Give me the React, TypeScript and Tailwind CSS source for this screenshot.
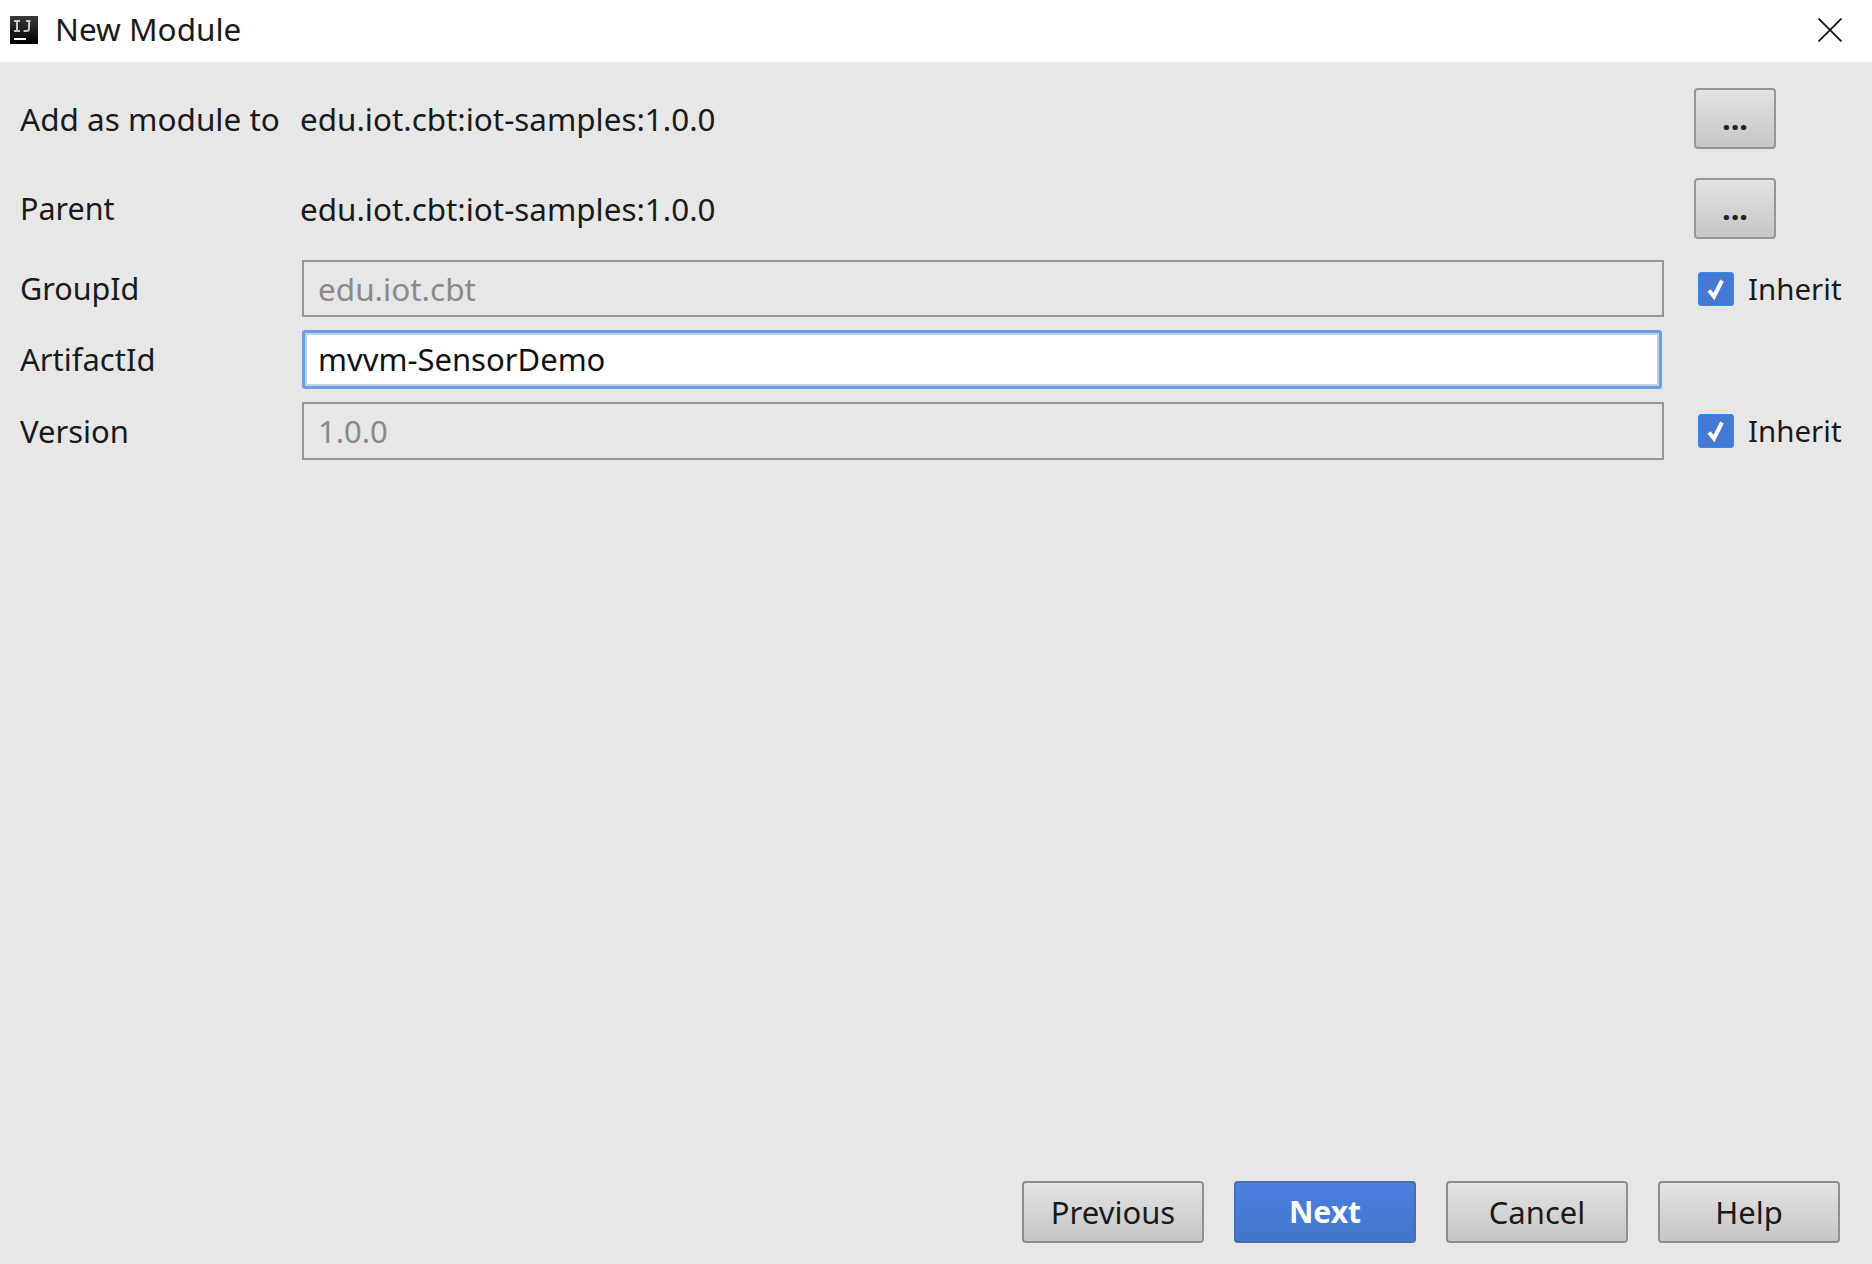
import React from 'react';

const font = "font-['Noto_Sans','Open_Sans',sans-serif]";

const IdeaIcon: React.FC = () => (
  <svg width="28" height="28" viewBox="0 0 28 28" className="shrink-0 mb-[2px]">
    <defs>
      <linearGradient id="ij" x1="0" y1="0" x2="0" y2="1">
        <stop offset="0" stopColor="#3a3a3a" />
        <stop offset="1" stopColor="#000000" />
      </linearGradient>
    </defs>
    <rect width="28" height="28" fill="url(#ij)" />
    <path d="M4 5h6M7 5v10M4 15h6M13.500 15h3c1.500 0 2.500-1 2.500-2.500V5M16 5h4.500" fill="none" stroke="#c8c8c8" strokeWidth="2" />
    <rect x="4" y="22" width="12" height="2" fill="#ffffff" />
  </svg>
);

const BrowseButton: React.FC = () => (
  <button className="w-[82px] h-full ml-[30px] shrink-0 rounded-[4px] border-2 border-[#969696] bg-gradient-to-b from-[#e3e3e3] to-[#c6c6c6] text-[31px] font-bold leading-none text-[#222] pb-[1px]">
    ...
  </button>
);

const Inherit: React.FC = () => (
  <div className="ml-[34px] flex items-center shrink-0">
    <span className="flex items-center justify-center w-[36px] h-[34px] rounded-[3px] bg-[#4479d4] border border-[#2f8cf0]">
      <svg width="22" height="24" viewBox="0 0 22 24">
        <path d="M4 13.500l5 6L17 3.500" fill="none" stroke="#ffffff" strokeWidth="4" />
      </svg>
    </span>
    <span className="ml-[14px] text-[29.5px] leading-none text-[#1a1a1a]">Inherit</span>
  </div>
);

const FooterButton: React.FC<{ label: string; primary?: boolean }> = ({ label, primary }) => (
  <button
    className={
      primary
        ? 'w-[182px] h-[62px] rounded-[4px] border-2 border-[#4a6fae] bg-gradient-to-b from-[#4a80e0] to-[#4375cb] text-white font-bold text-[30px] leading-none'
        : 'w-[182px] h-[62px] rounded-[4px] border-2 border-[#8f8f8f] bg-gradient-to-b from-[#e3e3e3] to-[#c6c6c6] text-[#1a1a1a] text-[31px] leading-none'
    }
  >
    {label}
  </button>
);

const App: React.FC = () => {
  return (
    <div className={`${font} w-[1872px] h-[1264px] flex flex-col bg-[#e7e7e7] overflow-hidden text-[#1a1a1a]`}>
      <div className="h-[62px] bg-white flex items-center pl-[10px] pr-[30px] shrink-0">
        <IdeaIcon />
        <span className="ml-[17px] text-[31.5px] leading-none mb-[5px]">New Module</span>
        <svg width="24" height="24" viewBox="0 0 24 24" className="ml-auto mb-[2px]">
          <path d="M0.500 0.500l23 23M23.500 0.500l-23 23" stroke="#111" strokeWidth="1.700" fill="none" />
        </svg>
      </div>

      <div className="flex-1 flex flex-col pt-[26px] pl-[20px]">
        <div className="flex items-center h-[61px]">
          <span className="w-[280px] text-[31.5px] leading-none">Add as module to</span>
          <span className="w-[1364px] text-[31.4px] leading-none">edu.iot.cbt:iot-samples:1.0.0</span>
          <BrowseButton />
        </div>
        <div className="flex items-center h-[61px] mt-[29px]">
          <span className="w-[280px] text-[30.5px] leading-none">Parent</span>
          <span className="w-[1364px] text-[31.4px] leading-none">edu.iot.cbt:iot-samples:1.0.0</span>
          <BrowseButton />
        </div>
        <div className="flex items-center h-[57px] mt-[21px]">
          <span className="w-[282px] text-[30.5px] leading-none">GroupId</span>
          <div className="w-[1362px] h-full border-2 border-[#969696] flex items-center pl-[14px] text-[31.5px] leading-none text-[#8a8a8a]">edu.iot.cbt</div>
          <Inherit />
        </div>
        <div className="flex items-center h-[59px] mt-[13px]">
          <span className="w-[282px] text-[31px] leading-none">ArtifactId</span>
          <div className="w-[1360px] h-full rounded-[3px] border-[3px] border-[#6a9fe0] ring-2 ring-inset ring-[#bcd3f0] bg-white flex items-center pl-[13px] text-[31px] leading-none text-[#111]">mvvm-SensorDemo</div>
        </div>
        <div className="flex items-center h-[58px] mt-[13px]">
          <span className="w-[282px] text-[31px] leading-none">Version</span>
          <div className="w-[1362px] h-full border-2 border-[#969696] flex items-center pl-[14px] text-[31px] leading-none text-[#8a8a8a]">1.0.0</div>
          <Inherit />
        </div>

        <div className="mt-auto mb-[21px] pr-[32px] flex justify-end gap-[30px]">
          <FooterButton label="Previous" />
          <FooterButton label="Next" primary />
          <FooterButton label="Cancel" />
          <FooterButton label="Help" />
        </div>
      </div>
    </div>
  );
};

export default App;
